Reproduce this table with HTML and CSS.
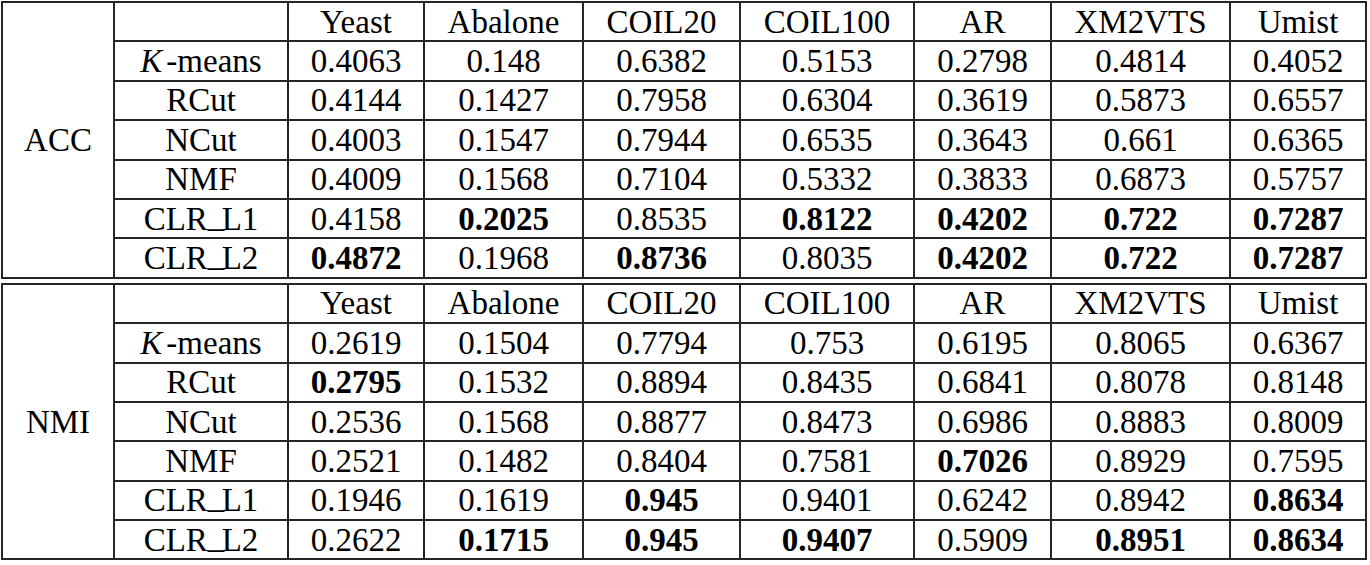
FILE: index.html
```html
<!DOCTYPE html>
<html lang="en">
<head>
    <meta charset="UTF-8">
    <meta name="viewport" content="width=device-width, initial-scale=1.0">
    <title>Clustering Results</title>
    <link rel="stylesheet" href="styles.css">
</head>
<body>

<div class="results">
    <table class="block">
        <colgroup>
            <col class="c-metric"><col class="c-method"><col class="c-yeast"><col class="c-abalone"><col class="c-coil20">
            <col class="c-coil100"><col class="c-ar"><col class="c-xm2vts"><col class="c-umist">
        </colgroup>
        <tr>
            <td class="metric" rowspan="7">ACC</td>
            <td></td>
            <td>Yeast</td><td>Abalone</td><td>COIL20</td><td>COIL100</td><td>AR</td><td>XM2VTS</td><td>Umist</td>
        </tr>
        <tr>
            <td><i class="k">K</i>-means</td>
            <td>0.4063</td><td>0.148</td><td>0.6382</td><td>0.5153</td><td>0.2798</td><td>0.4814</td><td>0.4052</td>
        </tr>
        <tr>
            <td>RCut</td>
            <td>0.4144</td><td>0.1427</td><td>0.7958</td><td>0.6304</td><td>0.3619</td><td>0.5873</td><td>0.6557</td>
        </tr>
        <tr>
            <td>NCut</td>
            <td>0.4003</td><td>0.1547</td><td>0.7944</td><td>0.6535</td><td>0.3643</td><td>0.661</td><td>0.6365</td>
        </tr>
        <tr>
            <td>NMF</td>
            <td>0.4009</td><td>0.1568</td><td>0.7104</td><td>0.5332</td><td>0.3833</td><td>0.6873</td><td>0.5757</td>
        </tr>
        <tr>
            <td>CLR<span class="us">_</span>L1</td>
            <td>0.4158</td><td class="best">0.2025</td><td>0.8535</td><td class="best">0.8122</td><td class="best">0.4202</td><td class="best">0.722</td><td class="best">0.7287</td>
        </tr>
        <tr>
            <td>CLR<span class="us">_</span>L2</td>
            <td class="best">0.4872</td><td>0.1968</td><td class="best">0.8736</td><td>0.8035</td><td class="best">0.4202</td><td class="best">0.722</td><td class="best">0.7287</td>
        </tr>
    </table>

    <table class="block">
        <colgroup>
            <col class="c-metric"><col class="c-method"><col class="c-yeast"><col class="c-abalone"><col class="c-coil20">
            <col class="c-coil100"><col class="c-ar"><col class="c-xm2vts"><col class="c-umist">
        </colgroup>
        <tr>
            <td class="metric" rowspan="7">NMI</td>
            <td></td>
            <td>Yeast</td><td>Abalone</td><td>COIL20</td><td>COIL100</td><td>AR</td><td>XM2VTS</td><td>Umist</td>
        </tr>
        <tr>
            <td><i class="k">K</i>-means</td>
            <td>0.2619</td><td>0.1504</td><td>0.7794</td><td>0.753</td><td>0.6195</td><td>0.8065</td><td>0.6367</td>
        </tr>
        <tr>
            <td>RCut</td>
            <td class="best">0.2795</td><td>0.1532</td><td>0.8894</td><td>0.8435</td><td>0.6841</td><td>0.8078</td><td>0.8148</td>
        </tr>
        <tr>
            <td>NCut</td>
            <td>0.2536</td><td>0.1568</td><td>0.8877</td><td>0.8473</td><td>0.6986</td><td>0.8883</td><td>0.8009</td>
        </tr>
        <tr>
            <td>NMF</td>
            <td>0.2521</td><td>0.1482</td><td>0.8404</td><td>0.7581</td><td class="best">0.7026</td><td>0.8929</td><td>0.7595</td>
        </tr>
        <tr>
            <td>CLR<span class="us">_</span>L1</td>
            <td>0.1946</td><td>0.1619</td><td class="best">0.945</td><td>0.9401</td><td>0.6242</td><td>0.8942</td><td class="best">0.8634</td>
        </tr>
        <tr>
            <td>CLR<span class="us">_</span>L2</td>
            <td>0.2622</td><td class="best">0.1715</td><td class="best">0.945</td><td class="best">0.9407</td><td>0.5909</td><td class="best">0.8951</td><td class="best">0.8634</td>
        </tr>
    </table>
</div>

</body>
</html>
```

FILE: styles.css
```css
* {
    box-sizing: border-box;
    margin: 0;
    padding: 0;
}

html, body {
    background: #fff;
    color: #000;
    font-family: "Liberation Serif", "Times New Roman", serif;
}

.results {
    display: flex;
    flex-direction: column;
    gap: 4px;
    padding: 1px 0 0 1px;
}

.block {
    width: 1364px;
    table-layout: fixed;
    border-collapse: collapse;
    font-size: 33px;
}

.block td {
    height: 39.4px;
    border: 2px solid #262626;
    text-align: center;
    vertical-align: middle;
    line-height: 30px;
    white-space: nowrap;
    padding: 0;
}

/* column widths, measured between the rules */
.c-metric { width: 112px; }
.c-method { width: 174px; }
.c-yeast { width: 136px; }
.c-abalone { width: 159px; }
.c-coil20 { width: 157px; }
.c-coil100 { width: 174px; }
.c-ar { width: 137px; }
.c-xm2vts { width: 179px; }
.c-umist { width: 136px; }

.best {
    font-weight: bold;
}

.k {
    padding-right: 0.12em;
}

.us {
    letter-spacing: -0.08em;
    vertical-align: 0.08em;
    line-height: 0;
}
```
